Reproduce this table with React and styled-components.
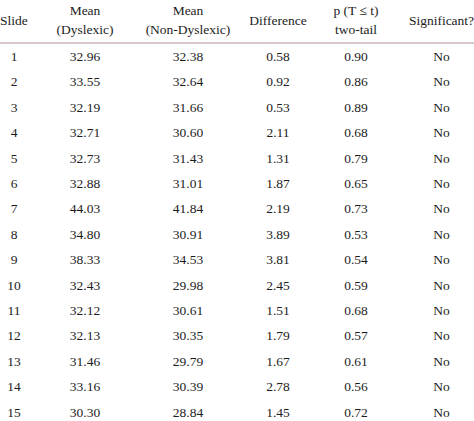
import React from "react";
import styled, { createGlobalStyle } from "styled-components";

const Global = createGlobalStyle`
  html, body { margin: 0; padding: 0; background: #fff; overflow: hidden; }
  body { font-family: "Liberation Serif", "Times New Roman", serif; }
`;

const Table = styled.table`
  border-collapse: collapse;
  table-layout: fixed;
  width: 493px;
  font-family: "Liberation Serif", "Times New Roman", serif;
  font-size: 13.5px;
  color: #1c1c1c;
`;

const HeadCell = styled.th`
  font-weight: normal;
  text-align: center;
  vertical-align: middle;
  line-height: 19px;
  padding: 1px 0 3px;
  border-bottom: 2px solid #d7c7cb;
  width: ${(p) => p.$w}px;
  white-space: nowrap;
`;

const Cell = styled.td`
  text-align: center;
  height: 25.4px;
  padding: 0;
  line-height: 25.4px;
  white-space: nowrap;
`;

const columns = [
  { w: 28, label: ["Slide"] },
  { w: 114, label: ["Mean", "(Dyslexic)"] },
  { w: 92, label: ["Mean", "(Non-Dyslexic)"] },
  { w: 88, label: ["Difference"] },
  { w: 68, label: ["p (T \u2264 t)", "two-tail"] },
  { w: 103, label: ["Significant?"] },
];

const rows = [
  [1, "32.96", "32.38", "0.58", "0.90"],
  [2, "33.55", "32.64", "0.92", "0.86"],
  [3, "32.19", "31.66", "0.53", "0.89"],
  [4, "32.71", "30.60", "2.11", "0.68"],
  [5, "32.73", "31.43", "1.31", "0.79"],
  [6, "32.88", "31.01", "1.87", "0.65"],
  [7, "44.03", "41.84", "2.19", "0.73"],
  [8, "34.80", "30.91", "3.89", "0.53"],
  [9, "38.33", "34.53", "3.81", "0.54"],
  [10, "32.43", "29.98", "2.45", "0.59"],
  [11, "32.12", "30.61", "1.51", "0.68"],
  [12, "32.13", "30.35", "1.79", "0.57"],
  [13, "31.46", "29.79", "1.67", "0.61"],
  [14, "33.16", "30.39", "2.78", "0.56"],
  [15, "30.30", "28.84", "1.45", "0.72"],
];

export default function App() {
  return (
    <>
      <Global />
      <Table>
        <thead>
          <tr>
            {columns.map((c, i) => (
              <HeadCell key={i} $w={c.w}>
                {c.label.map((l, j) => (
                  <React.Fragment key={j}>
                    {j > 0 && <br />}
                    {l}
                  </React.Fragment>
                ))}
              </HeadCell>
            ))}
          </tr>
        </thead>
        <tbody>
          {rows.map((r) => (
            <tr key={r[0]}>
              {r.map((v, i) => (
                <Cell key={i}>{v}</Cell>
              ))}
              <Cell>No</Cell>
            </tr>
          ))}
        </tbody>
      </Table>
    </>
  );
}
